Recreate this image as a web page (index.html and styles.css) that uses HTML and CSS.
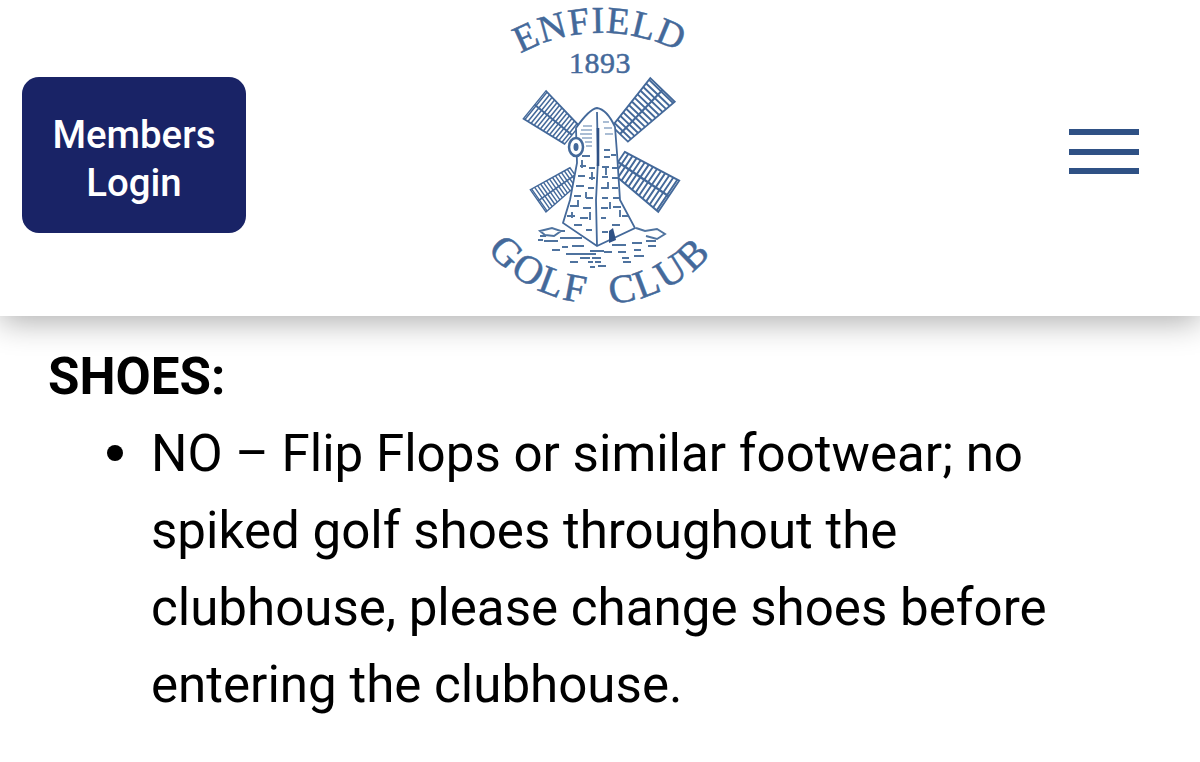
FILE: index.html
```html
<!DOCTYPE html>
<html lang="en">
<head>
    <meta charset="UTF-8">
    <meta name="viewport" content="width=device-width, initial-scale=1.0">
    <title>Enfield Golf Club</title>
    <link rel="stylesheet" href="styles.css">
</head>
<body>
    <header class="site-header">
        <a class="login-btn" href="#">Members<br>Login</a>

        <!-- Club crest -->
        <svg class="crest" viewBox="480 0 240 316" width="240" height="316" aria-label="Enfield Golf Club 1893">
            <defs>
                <path id="arcTop" d="M505 63 A170 170 0 0 1 695 61"/>
                <path id="arcBottom" d="M478 238 A147 147 0 0 0 722 240"/>
                <clipPath id="sailClip"><polygon points="0,-11 60,-17 60,17 0,11"/></clipPath>
                <g id="sail">
                    <polygon class="sail-edge" points="0,-11 60,-17 60,17 0,11"/>
                    <path class="sail-rungs" clip-path="url(#sailClip)" d="M4-17V17M8.5-17V17M13-17V17M17.500-17V17M22-17V17M26.500-17V17M31-17V17M35.500-17V17M40-17V17M44.500-17V17M49-17V17M53.500-17V17M58-17V17"/>
                    <path class="sail-spar" d="M0 0H60"/>
                </g>
            </defs>

            <text class="crest-name"><textPath href="#arcTop" startOffset="50%" text-anchor="middle">ENFIELD</textPath></text>
            <text class="crest-year" x="600" y="73" text-anchor="middle">1893</text>

            <use href="#sail" transform="translate(620 134) rotate(-46) scale(1.02 1)"/>
            <use href="#sail" transform="translate(572 135) rotate(219) scale(.8 1.05)"/>
            <use href="#sail" transform="translate(575 175) rotate(145) scale(.75 .8)"/>
            <use href="#sail" transform="translate(618 162) rotate(34) scale(1.02 1.1)"/>

            <path class="tower" d="M576 128C583 118 590 109 597 108C604 109 610 116 615 127L617 153L620 200L635 228L597 246L563 223L570 200L577 163Z"/>
            <path class="tower-line" d="M597 112L598 160L596 200L597 246"/>
            <path class="tower-heavy" d="M598 128V166"/>
            <ellipse class="porthole" cx="576" cy="147" rx="7" ry="9"/>
            <ellipse class="porthole-in" cx="576" cy="147" rx="2.500" ry="4"/>
            <path class="shade" d="M583 126h9M581 130h11M580 134h12M582 138h10M585 142h7M586 146h6M603 122h6M604 128h8M605 134h8"/>
            <path class="bricks" d="M582 156h8M604 150h6M604 157h6M611 155h5M580 166h6M589 168h6M602 167h7M612 168h5M578 176h7M589 178h6M602 177h6M612 178h6M576 186h8M588 188h6M601 188h7M612 188h6M574 196h7M586 198h7M602 198h6M613 198h6M570 206h8M583 208h8M601 208h7M613 207h8M567 216h8M580 218h8M601 218h5M622 216h6M574 225h8M586 230h6M602 232h6M612 225h8M582 160v8M592 172v8M608 182v7M578 200v7M590 212v8M610 202v7M620 210v7M606 168v7M572 212v6M586 192v6"/>
            <path class="door" d="M609 231L613 228L616 240L609 243Z"/>
            <path class="ground" d="M540 231l12-3l9 3l-7 5l-9-1ZM636 228l9 3l12-2l8 5l-8 5l-11-3M544 241h14M560 238h22M572 246h12M552 250h8M562 247h6M566 254h30M590 251h14M580 258h10M592 258h9M604 252h8M612 245h14M618 252h8M632 243h10M646 241h10M634 250h7M648 246h8M622 258h7M634 256h10M570 262h8M588 262h5M595 262h6M623 262h8M598 266h8M590 267h5M538 240h5M560 231h5M540 236h6"/>

            <text class="crest-name crest-name-low"><textPath href="#arcBottom" startOffset="50%" text-anchor="middle">GOLF&#160;&#160;CLUB</textPath></text>
        </svg>

        <button class="menu-btn" aria-label="Menu">
            <span></span>
            <span></span>
            <span></span>
        </button>
    </header>

    <main class="content">
        <p class="section-title">SHOES:</p>
        <ul class="rules">
            <li>NO – Flip Flops or similar footwear; no spiked golf shoes throughout the clubhouse, please change shoes before entering the clubhouse.</li>
        </ul>
    </main>
</body>
</html>
```

FILE: styles.css
```css
html, body {
    height: 100%;
}

body {
    margin: 0;
    overflow: hidden;
    background: #fff;
    color: #000;
    font-family: Roboto, sans-serif;
}

.site-header {
    position: relative;
    z-index: 2;
    display: grid;
    grid-template-columns: 1fr auto 1fr;
    align-items: center;
    height: 316px;
    background: #fff;
    box-shadow: 0 6px 30px rgba(0, 0, 0, 0.32);
}

.login-btn {
    justify-self: start;
    display: block;
    box-sizing: border-box;
    width: 224px;
    height: 156px;
    margin: 0 0 6px 22px;
    padding-top: 34px;
    border-radius: 17px;
    background: #192366;
    color: #fff;
    font-size: 38.4px;
    font-weight: 500;
    line-height: 48px;
    text-align: center;
    text-decoration: none;
}

.crest {
    display: block;
}

.crest-name {
    fill: #44699a;
    stroke: #44699a;
    stroke-width: 0.5px;
    font-family: "Liberation Serif", serif;
    font-size: 38px;
    letter-spacing: 1px;
}

.crest-name-low {
    font-size: 40px;
    letter-spacing: 2.5px;
}

.crest-year {
    fill: #44699a;
    stroke: #44699a;
    stroke-width: 0.5px;
    font-family: "Liberation Serif", serif;
    font-size: 30px;
    letter-spacing: 0.5px;
}

.sail-edge {
    fill: #fff;
    stroke: #44699a;
    stroke-width: 1.8;
}

.sail-rungs {
    fill: none;
    stroke: #44699a;
    stroke-width: 1.9;
}

.sail-spar {
    fill: none;
    stroke: #44699a;
    stroke-width: 2;
}

.tower {
    fill: #fff;
    stroke: #44699a;
    stroke-width: 1.8;
}

.tower-line {
    fill: none;
    stroke: #44699a;
    stroke-width: 1.8;
}

.tower-heavy {
    fill: none;
    stroke: #2f5185;
    stroke-width: 2.6;
}

.porthole {
    fill: #fff;
    stroke: #44699a;
    stroke-width: 2.5;
}

.porthole-in {
    fill: #44699a;
}

.shade {
    fill: none;
    stroke: #8fa8c6;
    stroke-width: 1.4;
}

.bricks,
.ground {
    fill: none;
    stroke: #4f739f;
    stroke-width: 1.9;
}

.door {
    fill: #2f5185;
}

.menu-btn {
    justify-self: end;
    display: flex;
    flex-direction: column;
    gap: 13.5px;
    width: 70px;
    margin: 0 61px 13px 0;
    padding: 0;
    border: none;
    background: none;
}

.menu-btn span {
    display: block;
    width: 100%;
    height: 6px;
    background: #2f5185;
}

.content {
    padding: 22px 48px 0;
}

.section-title {
    margin: 0;
    font-size: 51.1px;
    font-weight: 700;
    line-height: 77px;
}

.rules {
    margin: 0;
    padding-left: 103px;
    list-style: none;
    font-size: 51.1px;
    line-height: 77px;
}

.rules li {
    position: relative;
}

.rules li::before {
    content: "";
    position: absolute;
    left: -44px;
    top: 30px;
    width: 16px;
    height: 16px;
    border-radius: 50%;
    background: #000;
}
```
